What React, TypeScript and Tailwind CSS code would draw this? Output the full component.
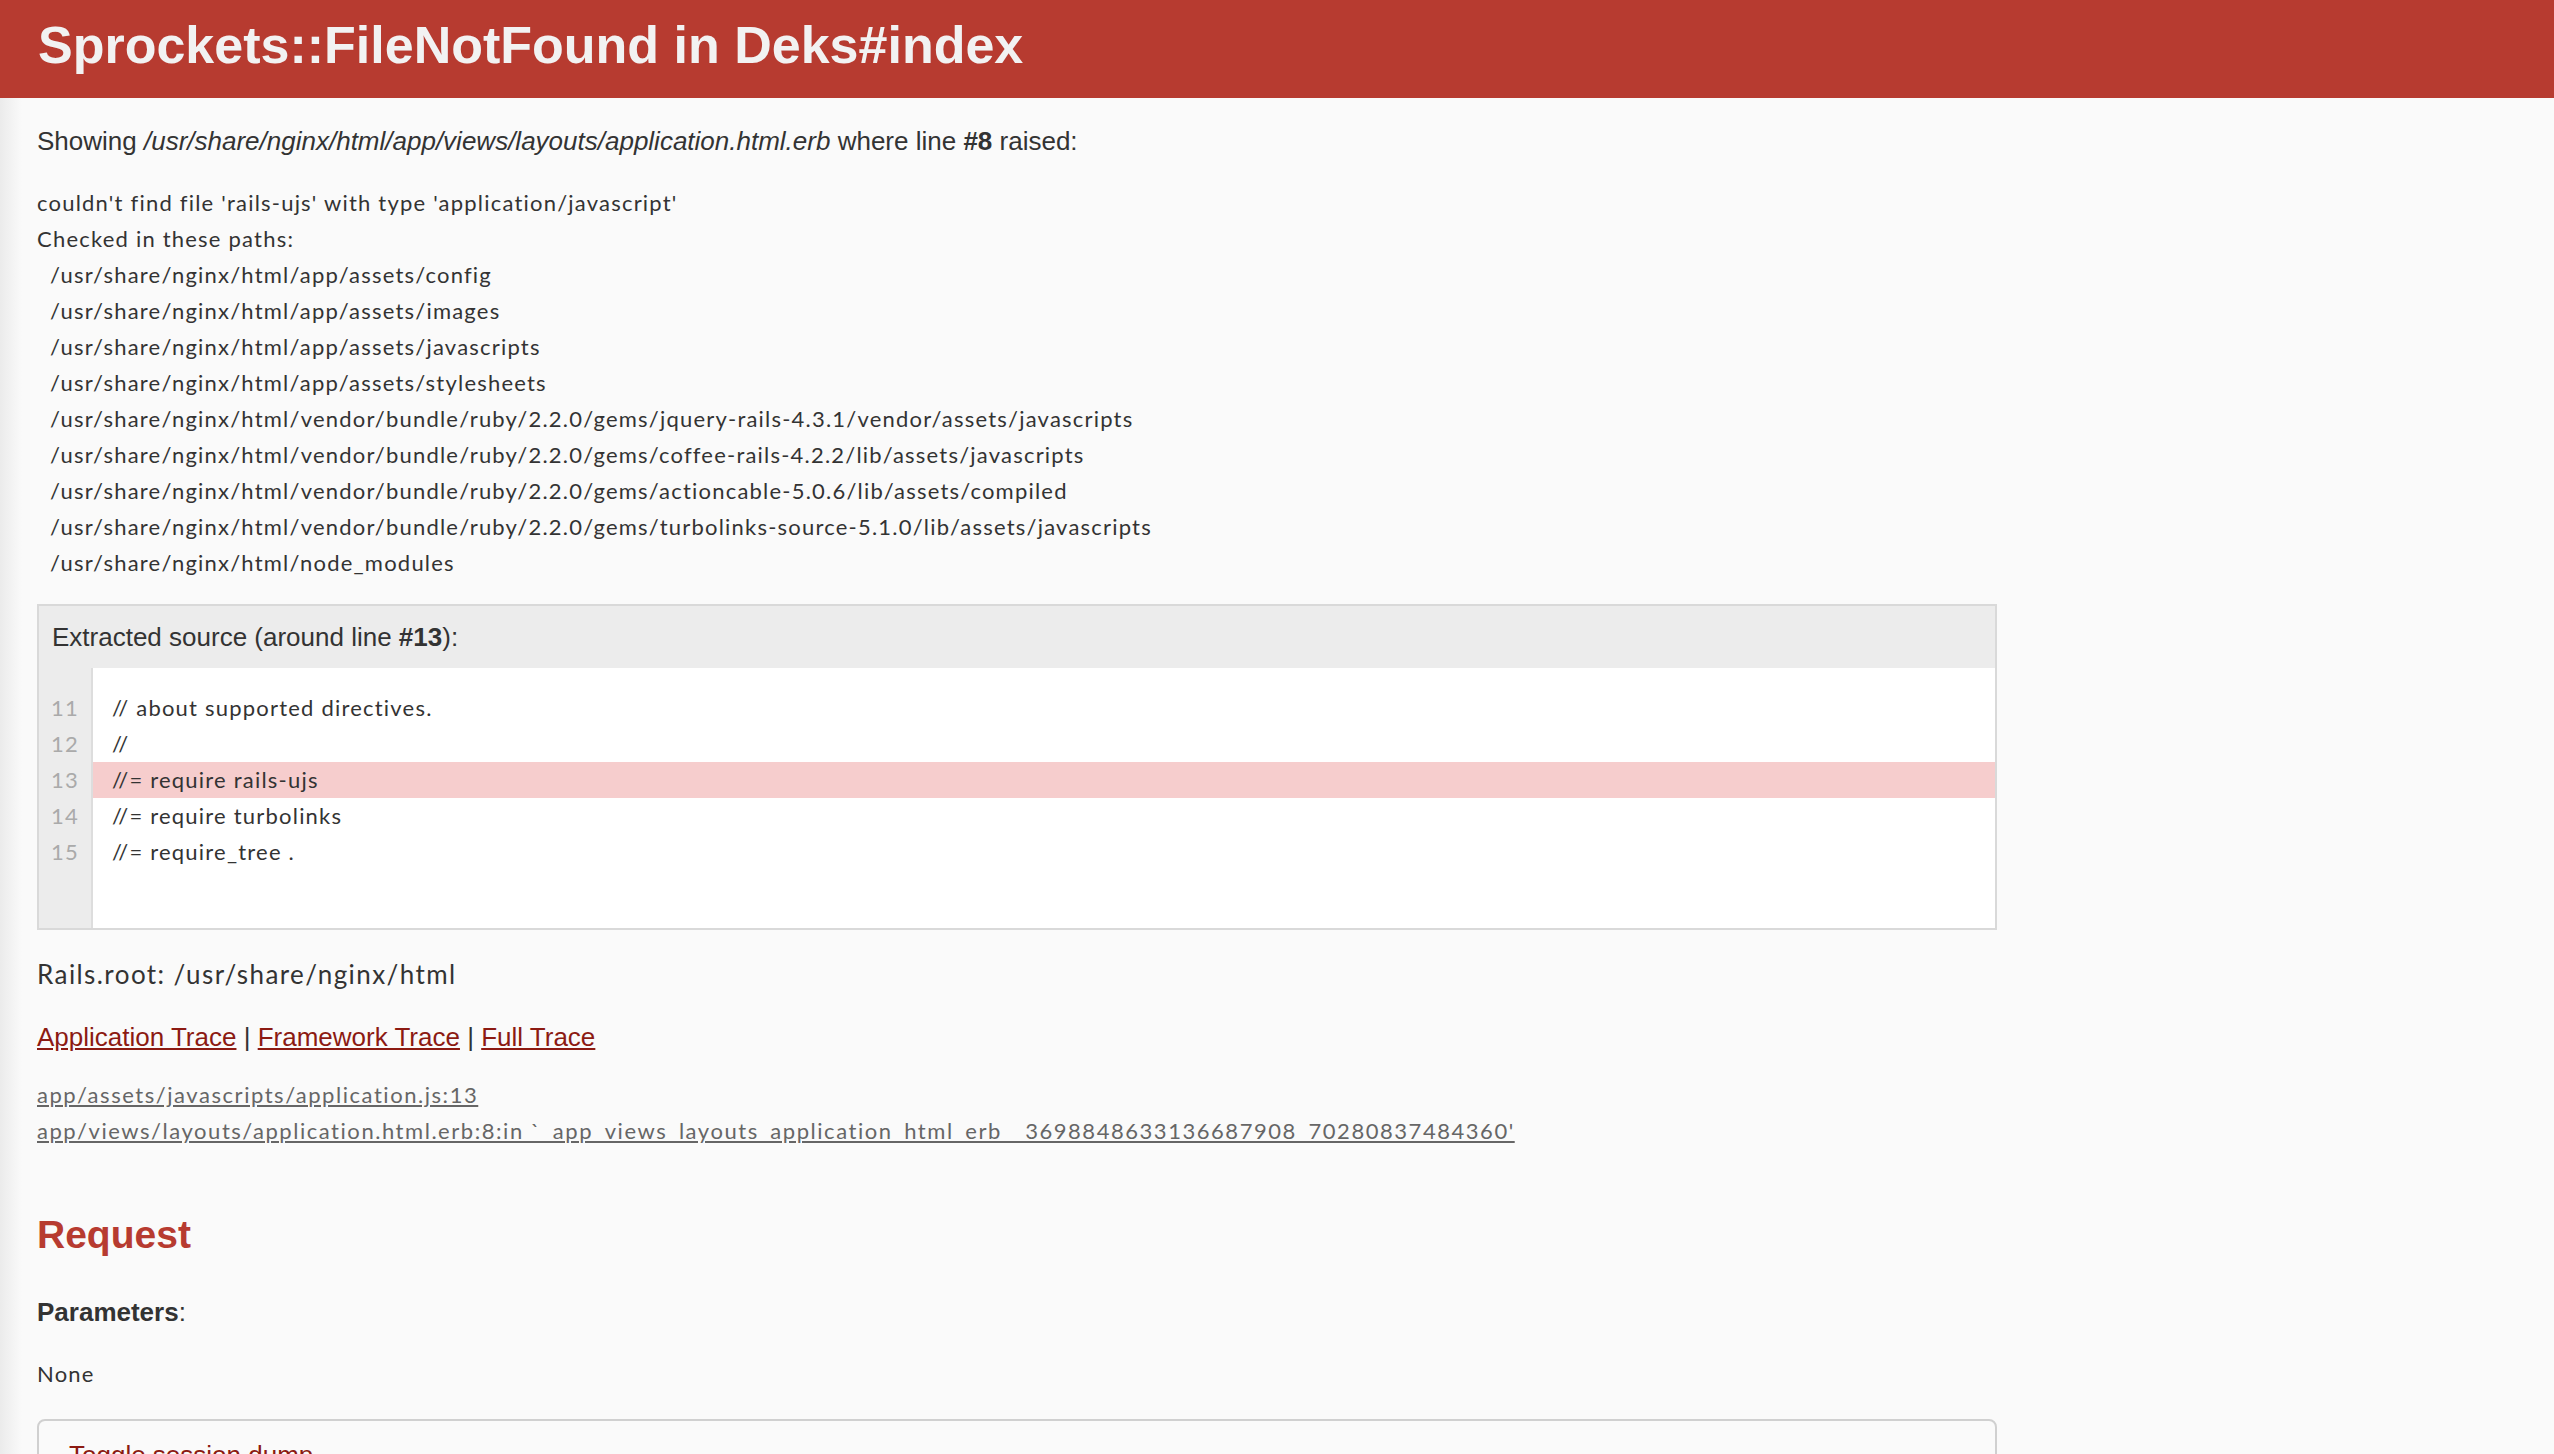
const mono = "font-['Lato','Open_Sans',sans-serif] tracking-[0.055em]";
const sans = "font-['Liberation_Sans','Helvetica','Arial',sans-serif]";

const checkedPaths = [
  "/usr/share/nginx/html/app/assets/config",
  "/usr/share/nginx/html/app/assets/images",
  "/usr/share/nginx/html/app/assets/javascripts",
  "/usr/share/nginx/html/app/assets/stylesheets",
  "/usr/share/nginx/html/vendor/bundle/ruby/2.2.0/gems/jquery-rails-4.3.1/vendor/assets/javascripts",
  "/usr/share/nginx/html/vendor/bundle/ruby/2.2.0/gems/coffee-rails-4.2.2/lib/assets/javascripts",
  "/usr/share/nginx/html/vendor/bundle/ruby/2.2.0/gems/actioncable-5.0.6/lib/assets/compiled",
  "/usr/share/nginx/html/vendor/bundle/ruby/2.2.0/gems/turbolinks-source-5.1.0/lib/assets/javascripts",
  "/usr/share/nginx/html/node_modules",
];

const sourceLines = [
  { number: 11, code: "// about supported directives." },
  { number: 12, code: "//" },
  { number: 13, code: "//= require rails-ujs", active: true },
  { number: 14, code: "//= require turbolinks" },
  { number: 15, code: "//= require_tree ." },
];

const traceFrames = [
  "app/assets/javascripts/application.js:13",
  "app/views/layouts/application.html.erb:8:in `_app_views_layouts_application_html_erb__3698848633136687908_70280837484360'",
];

export default function App() {
  return (
    <div
      className={`min-h-screen bg-[linear-gradient(to_right,#ebebeb,#fafafa_22px)] text-[#333] ${sans}`}
    >
      <header className="h-[98px] bg-[#b73b30] px-[38px] pt-[17px] text-[#f2f2f2]">
        <h1 className="text-[52px] leading-[57px] font-bold">
          Sprockets::FileNotFound in Deks#index
        </h1>
      </header>

      <div className="px-[37px]">
        <p className="mt-[25px] text-[26px] leading-[36px]">
          Showing <i>/usr/share/nginx/html/app/views/layouts/application.html.erb</i>{" "}
          where line <b>#8</b> raised:
        </p>

        <pre className={`mt-[26px] text-[22px] leading-[36px] ${mono}`}>
          <div>couldn't find file 'rails-ujs' with type 'application/javascript'</div>
          <div>Checked in these paths:</div>
          {checkedPaths.map((path) => (
            <div className="pl-[13px]" key={path}>
              {path}
            </div>
          ))}
        </pre>

        <div className="mt-[23px] w-[1960px] border-2 border-[#d9d9d9] bg-[#ececec]">
          <div className="px-[13px] py-[13px] text-[26px] leading-[36px]">
            Extracted source (around line <b>#13</b>):
          </div>
          <div className="flex h-[260px] bg-white text-[22px] leading-[36px]">
            <pre
              className={`w-[54px] border-r-2 border-[#dddddd] bg-[#ececec] pt-[22px] pr-[12px] text-right text-[#aaaaaa] ${mono}`}
            >
              {sourceLines.map((line) => (
                <div key={line.number}>{line.number}</div>
              ))}
            </pre>
            <pre className={`flex-1 pt-[22px] ${mono}`}>
              {sourceLines.map((line) => (
                <div
                  className={`pl-[19px] ${line.active ? "bg-[#f6cdcd]" : ""}`}
                  key={line.number}
                >
                  {line.code}
                </div>
              ))}
            </pre>
          </div>
        </div>

        <p className={`mt-[26px] text-[26px] leading-[36px] ${mono}`}>
          Rails.root: /usr/share/nginx/html
        </p>

        <p className="mt-[27px] text-[26px] leading-[36px]">
          <a className="text-[#8c1a12] underline" href="#">
            Application Trace
          </a>{" "}
          |{" "}
          <a className="text-[#8c1a12] underline" href="#">
            Framework Trace
          </a>{" "}
          |{" "}
          <a className="text-[#8c1a12] underline" href="#">
            Full Trace
          </a>
        </p>

        <pre
          className={`mt-[22px] text-[22px] leading-[36px] font-['Lato','Open_Sans',sans-serif] tracking-[0.07em]`}
        >
          {traceFrames.map((frame) => (
            <div key={frame}>
              <a className="text-[#666] underline" href="#">
                {frame}
              </a>
            </div>
          ))}
        </pre>

        <h2 className="mt-[61px] text-[39px] leading-[50px] font-bold text-[#b73b30]">
          Request
        </h2>

        <p className="mt-[34px] text-[26px] leading-[36px]">
          <b>Parameters</b>:
        </p>

        <pre className={`mt-[26px] text-[22px] leading-[36px] ${mono}`}>None</pre>

        <div className="mt-[27px] w-[1960px] rounded-[8px] border-2 border-[#d0d0d0]">
          <a
            className="block border-b-2 border-[#d0d0d0] px-[30px] py-[16px] text-[26px] leading-[36px] text-[#8c1a12] underline"
            href="#"
          >
            Toggle session dump
          </a>
          <div className="h-[120px]" />
        </div>
      </div>
    </div>
  );
}
